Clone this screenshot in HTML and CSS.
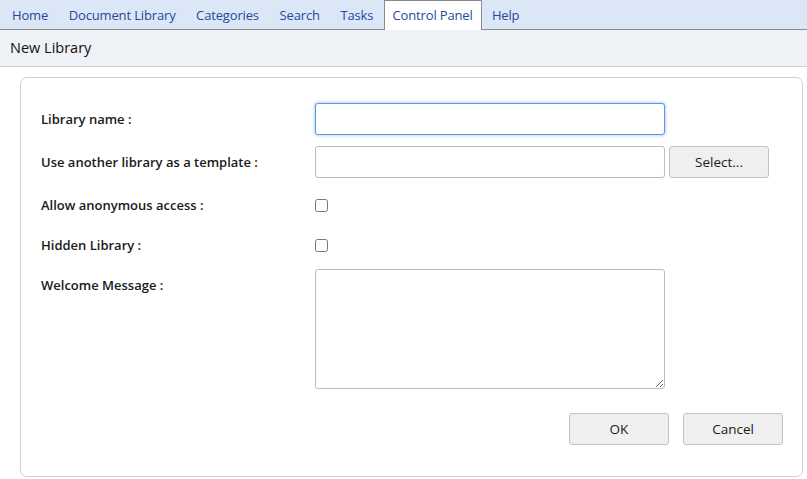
FILE: index.html
```html
<!DOCTYPE html>
<html>
<head>
<meta charset="utf-8">
<link rel="stylesheet" href="styles.css">
</head>
<body>
<nav class="tabs">
  <a class="tab">Home</a>
  <a class="tab">Document Library</a>
  <a class="tab">Categories</a>
  <a class="tab">Search</a>
  <a class="tab">Tasks</a>
  <a class="tab active">Control Panel</a>
  <a class="tab">Help</a>
</nav>
<header class="page-title">New Library</header>
<main class="card">
  <div class="row">
    <label class="label">Library name :</label>
    <input class="text focus" type="text" autofocus>
  </div>
  <div class="row row2">
    <label class="label">Use another library as a template :</label>
    <input class="text" type="text">
    <button class="btn select">Select...</button>
  </div>
  <div class="row check">
    <label class="label">Allow anonymous access :</label>
    <input class="cb" type="checkbox">
  </div>
  <div class="row check">
    <label class="label">Hidden Library :</label>
    <input class="cb" type="checkbox">
  </div>
  <div class="row area">
    <label class="label">Welcome Message :</label>
    <textarea class="msg"></textarea>
  </div>
  <div class="actions">
    <button class="btn">OK</button>
    <button class="btn">Cancel</button>
  </div>
</main>
</body>
</html>
```
FILE: styles.css
```css
* { box-sizing: border-box; }
html, body { margin: 0; padding: 0; background: #fff; }
body {
  font-family: "Open Sans", "Noto Sans", sans-serif;
  color: #1e1e1e;
  height: 479px;
  overflow: hidden;
}
.tabs {
  display: flex;
  height: 30px;
  background: #dbe7f7;
  border-bottom: 1px solid #8a8a8a;
  padding-left: 1px;
}
.tab {
  display: block;
  height: 29px;
  line-height: 28px;
  padding: 0 9.3px;
  font-size: 13px;
  letter-spacing: -0.15px;
  color: #26489a;
  border: 1px solid transparent;
  border-bottom: none;
  cursor: pointer;
}
.tab:first-child { padding-left: 10px; }
.tab.active {
  background: #fff;
  border-color: #8a8a8a;
  height: 30px;
  margin-bottom: -1px;
  padding: 0 8px;
}
.page-title {
  height: 37px;
  line-height: 36px;
  background: #eef2f6;
  border-bottom: 1px solid #cfd3d7;
  padding-left: 10px;
  font-size: 14.5px;
  color: #111;
}
.card {
  margin: 10px 4px 0 20px;
  border: 1px solid #cfcfcf;
  border-radius: 7px;
  padding: 25px 19px 31px 20px;
}
.row {
  display: flex;
  align-items: center;
  height: 32px;
}
.row2 { margin-top: 11px; }
.label {
  width: 274px;
  flex: none;
  font-size: 13px;
  font-weight: 600;
  color: #1a1a1a;
}
.text {
  width: 350px;
  height: 32px;
  border: 1px solid #bdbdbd;
  border-radius: 3px;
  padding: 0 8px;
  font: inherit;
  font-size: 14px;
  outline: none;
  background: #fff;
}
.text.focus {
  border-color: #5b96e0;
  box-shadow: 0 0 3px 1px rgba(80, 140, 230, 0.35);
}
.btn {
  width: 100px;
  height: 32px;
  border: 1px solid #c2c2c2;
  border-radius: 3px;
  background: #efefef;
  font-family: "Open Sans", "Noto Sans", sans-serif;
  font-size: 13.5px;
  color: #1a1a1a;
  padding: 0;
}
.select { margin-left: 4px; }
.check { height: 40px; }
.row2 + .check { margin-top: 7px; }
.cb {
  margin: 0;
  width: 13px;
  height: 13px;
}
.area {
  align-items: flex-start;
  height: auto;
  margin-top: 4px;
}
.area .label { line-height: 32px; }
.msg {
  width: 350px;
  height: 120px;
  border: 1px solid #bdbdbd;
  border-radius: 3px;
  resize: both;
  font: inherit;
  margin: 0;
}
.actions {
  display: flex;
  justify-content: flex-end;
  gap: 14px;
  margin-top: 24px;
}
```
